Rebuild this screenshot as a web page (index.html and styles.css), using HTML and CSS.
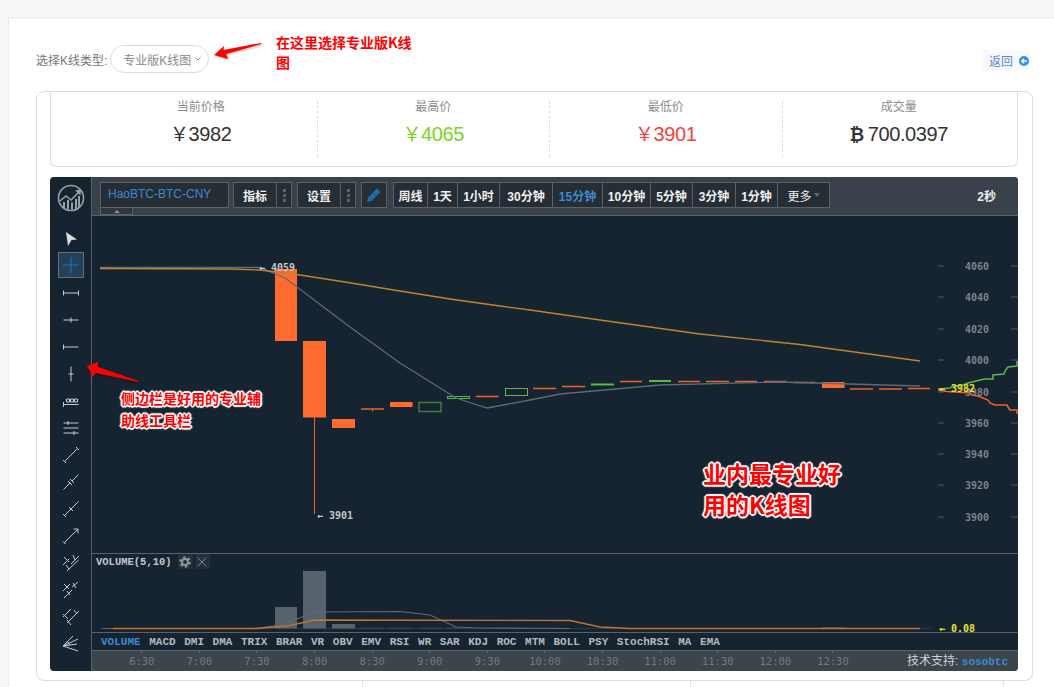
FILE: index.html
```html
<!DOCTYPE html>
<html lang="en">

<head>
    <meta charset="UTF-8">
    <meta name="viewport" content="width=device-width, initial-scale=1.0">
    <title>专业版K线图</title>
    <link rel="stylesheet" href="styles.css">
</head>

<body>
    <div class="panel">
        <div class="head">
            <span class="head-label">选择K线类型:</span>
            <div class="select">专业版K线图<svg class="chevron" viewBox="0 0 6 4"><path d="M.5.5 3 3 5.5.5"/></svg></div>
            <a class="back">返回<svg class="back-icon" viewBox="0 0 10 10"><circle cx="5" cy="5" r="5"/><path d="M7.8 5H3M5 2.8 2.8 5 5 7.2"/></svg></a>
        </div>

        <div class="card">
            <div class="stats">
                <div class="stat"><p class="stat-label">当前价格</p><p class="stat-value"><span class="unit">￥</span>3982</p></div>
                <div class="stat"><p class="stat-label">最高价</p><p class="stat-value green"><span class="unit">￥</span>4065</p></div>
                <div class="stat"><p class="stat-label">最低价</p><p class="stat-value red"><span class="unit">￥</span>3901</p></div>
                <div class="stat"><p class="stat-label">成交量</p><p class="stat-value"><span class="btc">₿</span>700.0397</p></div>
            </div>

            <div class="chart">
                <!-- left tool column -->
                <div class="tools">
                    <div class="logo">
                        <svg viewBox="0 0 28 28" width="28" height="28">
                            <circle cx="14" cy="14" r="12.5" class="logo-ring"/>
                            <path class="logo-bars" d="M7 24v-6M11 25v-9M15 25.500v-7M19 25v-10M22 23v-11"/>
                            <path class="logo-line" d="M3 17l6-5 5 4 8-8"/>
                            <path class="logo-head" d="M18 6.500 24 5.500 23.500 11.500z"/>
                        </svg>
                    </div>
                    <div class="tool-list">
                        <div class="tool"><svg viewBox="0 0 18 18"><path class="solid" d="M4 2 15 9.500 9.500 10 6 16z"/></svg></div>
                        <div class="tool active"><svg viewBox="0 0 18 18"><path class="blue" d="M9 1v16M1 9h16"/></svg></div>
                        <div class="tool"><svg viewBox="0 0 18 18"><path d="M1.500 9h15M1.500 6.500v5M16.500 6.500v5"/></svg></div>
                        <div class="tool"><svg viewBox="0 0 18 18"><path d="M1.500 9h15M9 6.500v5"/></svg></div>
                        <div class="tool"><svg viewBox="0 0 18 18"><path d="M1.500 9h15M1.500 6.500v5"/></svg></div>
                        <div class="tool"><svg viewBox="0 0 18 18"><path d="M9 1.500v15M6.500 9h5"/></svg></div>
                        <div class="tool"><svg viewBox="0 0 18 18"><path d="M1.500 12.500h15M1.500 10v5M4.500 7h3v3h-3zM8.500 7h3v3h-3zM12.500 7h3v3h-3z"/></svg></div>
                        <div class="tool"><svg viewBox="0 0 18 18"><path d="M1.500 4h15M1.500 9h15M1.500 14h15M6 2v4M12 12v4"/></svg></div>
                        <div class="tool"><svg viewBox="0 0 18 18"><path d="M2.500 15.500 15.500 2.500M1 14l3 3M14 1l3 3"/></svg></div>
                        <div class="tool"><svg viewBox="0 0 18 18"><path d="M1.500 16.500 8 10M10 8l6.500-6.500M6 8l4 4M8 6l4 4"/></svg></div>
                        <div class="tool"><svg viewBox="0 0 18 18"><path d="M2.500 15.500 16.500 1.500M1 14l3 3M7 7l4 4"/></svg></div>
                        <div class="tool"><svg viewBox="0 0 18 18"><path d="M2 16 15.500 2.500M11.500 2h4.500v4.500M1 14.500l2.500 2.500"/></svg></div>
                        <div class="tool"><svg viewBox="0 0 18 18"><path d="M1 11 7 5M2 3l5 5M5 17 16.500 6M9 10l4-4M11 1l2 5 4-4M4 11l3 4"/></svg></div>
                        <div class="tool"><svg viewBox="0 0 18 18"><path d="M1 10 8 3M2 3l5 5M2 17l8-8M5 10l3 4M10 6l6-5M11 2l3 5"/></svg></div>
                        <div class="tool"><svg viewBox="0 0 18 18"><path d="M1 9l8-8M5 15 17 3M1 6l5 5M5 12l4 5M12 2l3 4"/></svg></div>
                        <div class="tool"><svg viewBox="0 0 18 18"><path d="M1 11 16 4M1 11l15 5M1 11 15 9M1 11 11 1M5 6l3 4"/></svg></div>
                    </div>
                </div>

                <div class="stage">
                    <!-- top toolbar -->
                    <div class="topbar">
                        <div class="symbol-wrap">
                            <div class="symbol">HaoBTC-BTC-CNY</div>
                            <div class="symbol-tab"><i class="tri-up"></i></div>
                        </div>
                        <div class="btn-pair"><span class="btn wide">指标</span><span class="dots"><i></i><i></i><i></i></span></div>
                        <div class="btn-pair"><span class="btn wide">设置</span><span class="dots"><i></i><i></i><i></i></span></div>
                        <div class="btn-pair"><span class="btn pen"><svg viewBox="0 0 16 16" width="16" height="16"><path d="M1 15l1-4.500L11 1.500l3.500 3.500L5.500 14z"/></svg></span></div>
                        <div class="periods">
                            <span class="period w35">周线</span>
                            <span class="period w30">1天</span>
                            <span class="period w42">1小时</span>
                            <span class="period w53">30分钟</span>
                            <span class="period w50 on">15分钟</span>
                            <span class="period w48">10分钟</span>
                            <span class="period w42">5分钟</span>
                            <span class="period w43">3分钟</span>
                            <span class="period w42">1分钟</span>
                            <span class="period more">更多<i class="tri-down"></i></span>
                        </div>
                        <span class="rate">2秒</span>
                    </div>

                    <!-- price plot, drawn in page coordinates -->
                    <svg class="plot" viewBox="92 216 926 337">
                        <path class="tick" d="M938 266h6M938 297h6M938 329h6M938 360h6M938 392h6M938 423h6M938 454h6M938 485h6M938 517h6M1011 266h7M1011 297h7M1011 329h7M1011 360h7M1011 392h7M1011 423h7M1011 454h7M1011 485h7M1011 517h7"/>
                        <text class="axis" x="965" y="270">4060</text>
                        <text class="axis" x="965" y="301">4040</text>
                        <text class="axis" x="965" y="333">4020</text>
                        <text class="axis" x="965" y="364">4000</text>
                        <text class="axis" x="965" y="396">3980</text>
                        <text class="axis" x="965" y="427">3960</text>
                        <text class="axis" x="965" y="458">3940</text>
                        <text class="axis" x="965" y="489">3920</text>
                        <text class="axis" x="965" y="521">3900</text>

                        <path class="wick" d="M314.500 417v97M372.500 409v2.500"/>
                        <rect class="down" x="275" y="269" width="22" height="72"/>
                        <rect class="down" x="303" y="341" width="23" height="76.500"/>
                        <rect class="down" x="332" y="419" width="23" height="9"/>
                        <rect class="down" x="390" y="402" width="22.500" height="5"/>
                        <rect class="down" x="822" y="382" width="22.500" height="6"/>
                        <rect class="up dim" x="419" y="402.500" width="22" height="9"/>
                        <rect class="up" x="447.500" y="396.500" width="22" height="2"/>
                        <rect class="up" x="505.500" y="388.500" width="22" height="7"/>
                        <path class="dash" d="M361 409h23M476 396.500h22.500M533 388.500h23M562 386.500h23M620 381.500h22M678 381.500h22M706 381.500h23M735 381.500h22M764 381.500h22M793 382.500h22M850 389h23M879 389h23M908 388.500h22"/>
                        <path class="dash-up" d="M591 384.500h23M649 381h22"/>

                        <path class="ma-gray" d="M100 267.500 260 267.500 285 278 297 287 350 327 400 363 456 398 487 408 530 400 560 394 660 385 780 382 920 386"/>
                        <path class="ma-orange" d="M100 268.500 230 269 260 270 300 275 345 282 400 291 450 299 500 306 530 310 600 320 700 334 800 344.500 920 361"/>

                        <path class="depth-up" d="M938 389 950 388 952 386.500 963 385 968 383 980 380 985 379 993 379 993 375 1004 374 1005 371 1008 367 1017 366 1017 361"/>
                        <path class="depth-down" d="M938 390 947 391.500 970 393 972 395 978 396 983 398 988 400 990 403 995 405 1007 405 1008 407 1010 410 1017 410 1017 414"/>

                        <text class="mark" x="259" y="271">← 4059</text>
                        <text class="mark" x="317" y="518.500">← 3901</text>
                        <text class="mark last" x="939" y="392">← 3982</text>
                    </svg>

                    <!-- volume pane -->
                    <div class="volume">
                        <div class="volume-head">
                            <span class="volume-title">VOLUME(5,10)</span>
                            <span class="mini"><svg viewBox="0 0 12 12" width="12" height="12"><circle class="gear-teeth" cx="6" cy="6" r="4.800"/><circle class="gear" cx="6" cy="6" r="3"/></svg></span>
                            <span class="mini"><svg viewBox="0 0 12 12" width="12" height="12"><path class="cross" d="M1.500 1.500l9 9M10.500 1.500l-9 9"/></svg></span>
                        </div>
                        <svg class="volume-plot" viewBox="92 554 926 78">
                            <path class="base" d="M100 628.500H930"/>
                            <rect class="bar" x="275" y="607" width="22" height="21.500"/>
                            <rect class="bar" x="303" y="571" width="23" height="57.500"/>
                            <rect class="bar" x="332" y="624" width="23" height="4.500"/>
                            <path class="flat" d="M361 628h23M390 628h22M419 628h22M447 628h23M822 627.500h23"/>
                            <path class="vol-gray" d="M103 628.500 255 628.500 280 625 316 612 400 611.500 430 615 456 627 480 628 570 628.500"/>
                            <path class="vol-orange" d="M113 628.500 257 628.500 287 626 315 620 570 620.500 600 627 630 628.500 920 628.500"/>
                            <text class="mark last" x="939" y="631.500">← 0.08</text>
                        </svg>
                    </div>

                    <div class="indicators">
                        <span class="on">VOLUME</span><span>MACD</span><span>DMI</span><span>DMA</span><span>TRIX</span><span>BRAR</span><span>VR</span><span>OBV</span><span>EMV</span><span>RSI</span><span>WR</span><span>SAR</span><span>KDJ</span><span>ROC</span><span>MTM</span><span>BOLL</span><span>PSY</span><span>StochRSI</span><span>MA</span><span>EMA</span>
                    </div>

                    <div class="timeline">
                        <span>6:30</span><span>7:00</span><span>7:30</span><span>8:00</span><span>8:30</span><span>9:00</span><span>9:30</span><span>10:00</span><span>10:30</span><span>11:00</span><span>11:30</span><span>12:00</span><span>12:30</span>
                        <div class="credit">技术支持: <b>sosobtc</b></div>
                    </div>
                </div>
            </div>
        </div>

        <div class="next-row">
            <div class="cell c1"></div>
            <div class="cell c2"></div>
            <div class="cell c3"></div>
        </div>
    </div>

    <!-- red notes pasted over the screenshot -->
    <p class="note note-select">在这里选择专业版K线<br>图</p>
    <svg class="arrow arrow-select" viewBox="0 0 50 20"><path d="M0 13 10 4 9.500 8 47 1 47.500 2 12 12 14 17z"/></svg>
    <p class="note note-tools">侧边栏是好用的专业辅<br>助线工具栏</p>
    <svg class="arrow arrow-tools" viewBox="0 0 54 24"><path d="M0 4 11 0 11 5 52 19 51.500 20 9 11 6 15z"/></svg>
    <p class="note note-big">业内最专业好<br>用的K线图</p>
</body>

</html>
```
FILE: styles.css
```css
* {
    box-sizing: border-box;
}

html,
body {
    height: 687px;
    overflow: hidden;
}

body {
    margin: 0;
    position: relative;
    background: #f7f7f7;
    font-family: "Liberation Sans", "Noto Sans CJK SC", sans-serif;
    color: #333;
}

p {
    margin: 0;
}

.panel {
    margin: 17px 0 0 8px;
    height: 670px;
    padding: 27px 21px 0 27px;
    background: #fff;
    border-top: 1px solid #ececec;
    border-left: 1px solid #ececec;
}

/* header row */
.head {
    display: flex;
    align-items: center;
    height: 28px;
}

.head-label {
    font-size: 12px;
    color: #777;
}

.select {
    display: flex;
    align-items: center;
    width: 99px;
    height: 28px;
    margin-left: 3px;
    padding-left: 12px;
    border: 1px solid #ddd;
    border-radius: 14px;
    font-size: 12px;
    color: #8a8a8a;
}

.chevron {
    width: 6px;
    height: 4px;
    margin-left: 4px;
    fill: none;
    stroke: #888;
}

.back {
    display: flex;
    align-items: center;
    margin: 3px 4px 0 auto;
    padding: 2px 0 2px 6px;
    background: #f8f9fb;
    font-size: 12px;
    color: #5a86dc;
}

.back-icon {
    width: 10px;
    height: 10px;
    margin-left: 6px;
}

.back-icon circle {
    fill: #2f93ee;
}

.back-icon path {
    fill: none;
    stroke: #fff;
    stroke-width: 1.300;
}

/* card */
.card {
    height: 590px;
    margin-top: 18px;
    padding: 0 14px 0 13px;
    border: 1px solid #ddd;
    border-radius: 8px;
}

.stats {
    display: grid;
    grid-template-columns: repeat(4, 232.500px);
    height: 75px;
    padding: 9px 0 9px 34px;
    border: 1px solid #ddd;
    border-top: 0;
    border-radius: 0 0 6px 6px;
}

.stat {
    text-align: center;
    border-right: 1px dashed #ddd;
}

.stat:last-child {
    border-right: 0;
}

.stat-label {
    font-size: 12px;
    line-height: 13px;
    color: #8c8c8c;
}

.stat-value {
    margin-top: 6px;
    font-size: 20px;
    line-height: 28px;
    letter-spacing: -0.4px;
    color: #333;
}

.stat-value.green {
    color: #7ed321;
}

.stat-value.red {
    color: #f0433a;
}

.unit {
    font-size: 19px;
}

.btc {
    font-family: "DejaVu Sans", sans-serif;
    font-size: 18px;
    font-weight: 700;
    margin-right: 4px;
}

/* chart */
.chart {
    display: flex;
    height: 494px;
    margin-top: 10px;
    background: #162330;
    border-radius: 4px;
    overflow: hidden;
}

.tools {
    flex: none;
    width: 42px;
    border-right: 1px solid #5a6269;
}

.logo {
    display: flex;
    justify-content: center;
    align-items: center;
    height: 39px;
    padding-top: 2px;
}

.logo-ring,
.logo-line,
.logo-bars {
    fill: none;
    stroke: #9aa0a5;
    stroke-width: 1.600;
}

.logo-bars {
    stroke-width: 2;
}

.logo-head {
    fill: #9aa0a5;
}

.tool-list {
    display: flex;
    flex-direction: column;
    align-items: center;
    padding-top: 9px;
}

.tool {
    display: flex;
    justify-content: center;
    align-items: center;
    width: 26px;
    height: 27px;
}

.tool svg {
    width: 18px;
    height: 18px;
    fill: none;
    stroke: #c6cbcf;
    stroke-width: 1;
}

.tool .solid {
    fill: #d8dcdf;
    stroke: none;
}

.tool.active {
    height: 26px;
    margin-bottom: 1px;
    background: #24415c;
    border: 1px solid #5f7080;
}

.tool .blue {
    stroke: #2a6fae;
}

.stage {
    flex: 1;
    display: flex;
    flex-direction: column;
    min-width: 0;
}

/* toolbar */
.topbar {
    display: flex;
    align-items: flex-start;
    flex: none;
    height: 39px;
    padding: 5px 22px 0 8px;
    background: #39424b;
    border-bottom: 1px solid #5a6269;
}

.symbol-wrap {
    width: 129px;
    margin-right: 4px;
}

.symbol {
    height: 26px;
    padding: 0 7px;
    background: #262d34;
    border: 1px solid #5a6269;
    font-size: 12px;
    line-height: 22px;
    color: #3d8ad0;
}

.symbol-tab {
    display: flex;
    justify-content: center;
    align-items: center;
    width: 33px;
    height: 7px;
    background: #2e363e;
    border: 1px solid #5a6269;
    border-top: 0;
}

.tri-up {
    border: 3px solid transparent;
    border-top: 0;
    border-bottom: 3px solid #8a9197;
}

.btn-pair {
    display: flex;
    height: 26px;
    margin-right: 5px;
    background: #262d34;
    border: 1px solid #5a6269;
}

.btn {
    display: flex;
    justify-content: center;
    align-items: center;
    font-size: 12px;
    font-weight: 700;
    color: #f0f0f0;
}

.btn.wide {
    width: 42px;
}

.btn.pen {
    width: 24px;
}

.pen svg {
    fill: #1f69ad;
}

.dots {
    display: flex;
    flex-direction: column;
    justify-content: center;
    align-items: center;
    gap: 2px;
    width: 15px;
    border-left: 1px solid #5a6269;
}

.dots i {
    width: 3px;
    height: 3px;
    background: #5c6268;
}

.periods {
    display: flex;
    height: 26px;
    margin-left: 1px;
    background: #262d34;
    border: 1px solid #5a6269;
    border-bottom-color: #5a6269;
}

.period {
    display: flex;
    justify-content: center;
    align-items: center;
    border-right: 1px solid #5a6269;
    font-size: 12px;
    font-weight: 700;
    color: #f0f0f0;
}

.period.on {
    color: #3d8ad0;
}

.w30 { width: 30px; }
.w35 { width: 34px; }
.w42 { width: 42px; }
.w43 { width: 43px; }
.w48 { width: 48px; }
.w50 { width: 50px; }
.w53 { width: 53px; }

.period.more {
    width: 51px;
    border-right: 0;
    font-weight: 400;
}

.tri-down {
    margin-left: 2px;
    border: 3.500px solid transparent;
    border-bottom: 0;
    border-top: 4px solid #62686e;
}

.rate {
    margin: 5px 0 0 auto;
    font-size: 12px;
    font-weight: 700;
    color: #eee;
}

/* price plot */
.plot {
    flex: none;
    display: block;
    width: 926px;
    height: 337px;
}

.tick {
    stroke: #4d5a65;
    fill: none;
}

.axis {
    font-family: "DejaVu Sans Mono", monospace;
    font-size: 10px;
    font-weight: 700;
    fill: #7d8489;
}

.mark {
    font-family: "DejaVu Sans Mono", monospace;
    font-size: 10px;
    font-weight: 700;
    fill: #c3c7ca;
}

.mark.last {
    fill: #e3e32c;
}

.down {
    fill: #ff6b2e;
}

.wick {
    stroke: #e9642c;
    fill: none;
}

.up {
    fill: none;
    stroke: #5cb944;
}

.up.dim {
    stroke: #3f7f3a;
    stroke-width: 1.500;
}

.dash {
    fill: none;
    stroke: #f0632a;
    stroke-width: 1.600;
}

.dash-up {
    fill: none;
    stroke: #5cb944;
    stroke-width: 2;
}

.ma-gray {
    fill: none;
    stroke: #5e6a75;
    stroke-width: 1.300;
}

.ma-orange {
    fill: none;
    stroke: #c2822f;
    stroke-width: 1.300;
}

.depth-up {
    fill: none;
    stroke: #5cb944;
    stroke-width: 1.500;
}

.depth-down {
    fill: none;
    stroke: #f0632a;
    stroke-width: 1.500;
}

/* volume pane */
.volume {
    flex: none;
    position: relative;
    height: 80px;
    border-top: 1px solid #5a6269;
    border-bottom: 1px solid #5a6269;
}

.volume-head {
    position: absolute;
    top: 0;
    left: 4px;
    display: flex;
    align-items: center;
    gap: 2px;
}

.volume-title {
    margin-right: 4px;
    font-family: "Liberation Mono", monospace;
    font-size: 10.500px;
    font-weight: 700;
    color: #c3c7ca;
}

.mini {
    display: flex;
    justify-content: center;
    align-items: center;
    width: 15px;
    height: 15px;
    background: #243039;
}

.gear {
    fill: none;
    stroke: #8f959a;
    stroke-width: 2;
}

.gear-teeth {
    fill: none;
    stroke: #8f959a;
    stroke-width: 2;
    stroke-dasharray: 2.500 2.500;
}

.cross {
    stroke: #7d8489;
    fill: none;
}

.volume-plot {
    display: block;
    width: 926px;
    height: 78px;
}

.base {
    stroke: #2c3b47;
}

.bar {
    fill: #56626c;
}

.flat {
    stroke: #3a4853;
    stroke-width: 1;
    fill: none;
}

.vol-gray {
    fill: none;
    stroke: #5e6a75;
    stroke-width: 1.200;
}

.vol-orange {
    fill: none;
    stroke: #c2742a;
    stroke-width: 1.300;
}

.indicators {
    flex: none;
    display: flex;
    align-items: center;
    gap: 8.600px;
    height: 18px;
    padding-left: 9px;
    font-family: "Liberation Mono", monospace;
    font-size: 11px;
    font-weight: 700;
    color: #b4b9bd;
    border-bottom: 1px solid #5a6269;
}

.indicators .on {
    color: #3d8ad0;
}

.timeline {
    flex: 1;
    display: flex;
    padding-left: 21px;
    background: #3c444c;
    font-family: "DejaVu Sans Mono", monospace;
    font-size: 10.500px;
    line-height: 20px;
    color: #737a80;
}

.timeline > span {
    flex: none;
    width: 57.600px;
    text-align: center;
    background: linear-gradient(#6b7279, #6b7279) center top / 1px 2px no-repeat;
}

.credit {
    margin-left: auto;
    padding-right: 10px;
    font-family: "Liberation Sans", "Noto Sans CJK SC", sans-serif;
    font-size: 12px;
    color: #d0d3d5;
}

.credit b {
    font-family: "Liberation Mono", monospace;
    font-size: 11px;
    color: #3d8ad0;
}

/* start of the next table, cut by the window */
.next-row {
    display: flex;
    margin-left: -27px;
    height: 6px;
}

.cell {
    border-right: 1px solid #e6e6e6;
}

.c1 {
    width: 354px;
}

.c2 {
    width: 328px;
}

.c3 {
    width: 313px;
}

/* red notes */
.note {
    position: absolute;
    font-family: "Noto Sans CJK SC", "Liberation Sans", sans-serif;
    font-weight: 700;
    color: #f00;
    text-shadow: 1px 0 #fff, -1px 0 #fff, 0 1px #fff, 0 -1px #fff, 1px 1px #fff, -1px -1px #fff, 1px -1px #fff, -1px 1px #fff, 2px 0 1px #fff, -2px 0 1px #fff, 0 2px 1px #fff, 0 -2px 1px #fff;
}

.note-select {
    left: 276px;
    top: 32px;
    font-size: 14px;
    line-height: 20px;
}

.note-tools {
    left: 121px;
    top: 387px;
    font-size: 14px;
    line-height: 22px;
}

.note-big {
    left: 703px;
    top: 458px;
    font-size: 23px;
    line-height: 31px;
}

.arrow {
    position: absolute;
    fill: #f00;
    filter: drop-shadow(1px 1px 1px rgba(0, 0, 0, 0.3));
}

.arrow-select {
    left: 214px;
    top: 42px;
    width: 50px;
    height: 20px;
}

.arrow-tools {
    left: 87px;
    top: 362px;
    width: 54px;
    height: 24px;
}
```
